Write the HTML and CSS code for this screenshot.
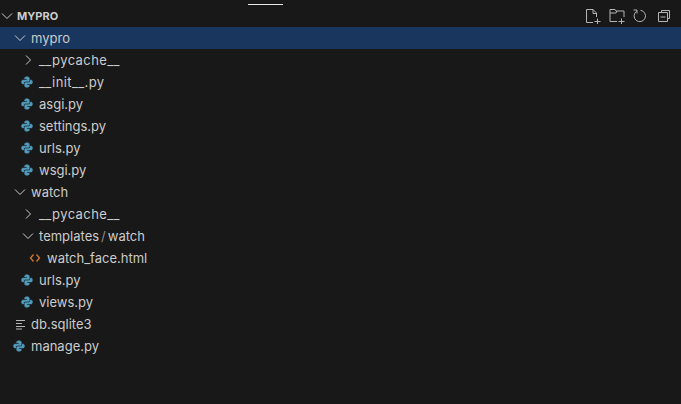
FILE: index.html
```html
<!DOCTYPE html>
<html lang="en">
<head>
  <meta charset="UTF-8" />
  <title>Explorer</title>
  <link rel="stylesheet" href="styles.css">
</head>
<body>
  <svg class="defs" width="0" height="0">
    <symbol id="chev-down" viewBox="0 0 16 16"><path d="M3 5.500 8 10.500l5-5" fill="none" stroke="currentColor" stroke-width="1"/></symbol>
    <symbol id="chev-right" viewBox="0 0 16 16"><path d="M6 3.500 10.500 8 6 12.500" fill="none" stroke="currentColor" stroke-width="1"/></symbol>
    <symbol id="py" viewBox="-0.9 -2.2 20.4 20.4">
      <path fill="#519aba" stroke="#519aba" stroke-width="0.5" d="M5 4.200V3c0-1 1-1.800 3-1.800S11 2 11 3v3c0 .8-.6 1.400-1.400 1.400H6.200C4.900 7.400 4 8.300 4 9.600v1H2.800C1.600 10.600 1 9.500 1 8s.6-2.600 1.800-2.600H8V4.200z"/>
      <path fill="#519aba" stroke="#519aba" stroke-width="0.5" d="M11 11.800V13c0 1-1 1.800-3 1.800S5 14 5 13v-3c0-.8.6-1.400 1.400-1.400h3.400c1.300 0 2.200-.9 2.200-2.200v-1h1.200C14.400 5.400 15 6.500 15 8s-.6 2.600-1.800 2.600H8v1.200z"/>
    </symbol>
    <symbol id="code" viewBox="0 0 16 16"><path d="M5.500 4.500 2.500 8l3 3.500M8.500 4.500l3 3.500-3 3.500" fill="none" stroke="#d9772d" stroke-width="1.300"/></symbol>
    <symbol id="lines" viewBox="0 0 16 16"><path d="M4 4.500h9M4 7.500h6M4 10.500h9M4 13h6" fill="none" stroke="#b8b8b8" stroke-width="1"/></symbol>
  </svg>

  <div class="drag-line"></div>

  <div class="explorer">
    <div class="header">
      <div class="header-title">
        <svg class="icon"><use href="#chev-down"/></svg>
        <span>MYPRO</span>
      </div>
      <div class="actions">
        <svg class="icon" viewBox="0 0 16 16"><path d="M1.500 14.500V1.500h6.500l3.500 3.500v4M8 1.500V5.500h3.500M1.500 14.500H8M9.500 13.500h6M12.500 10.500v6" fill="none" stroke="currentColor"/></svg>
        <svg class="icon" viewBox="0 0 16 16"><path d="M8 13.500H1V1.500h5l1 1.500h8v6M1 5h6l1-2M9.500 13.500h6M12.500 10.500v6" fill="none" stroke="currentColor"/></svg>
        <svg class="icon" viewBox="0 0 16 16"><path d="M3.500 3.300A5.700 5.700 0 1 0 7.500 2.300M.5 2h3.500v3.500" fill="none" stroke="currentColor"/></svg>
        <svg class="icon" viewBox="0 0 16 16"><path d="M4.500 4.500V2.500h8v8h-2M1.500 4.500h9v9h-9zM3.500 9h5" fill="none" stroke="currentColor"/></svg>
      </div>
    </div>

    <div class="row depth-1 selected"><svg class="icon"><use href="#chev-down"/></svg><span>mypro</span></div>
    <div class="row depth-2"><svg class="icon"><use href="#chev-right"/></svg><span class="dunder">__pycache__</span></div>
    <div class="row depth-2"><svg class="icon"><use href="#py"/></svg><span class="dunder">__init__.py</span></div>
    <div class="row depth-2"><svg class="icon"><use href="#py"/></svg><span>asgi.py</span></div>
    <div class="row depth-2"><svg class="icon"><use href="#py"/></svg><span>settings.py</span></div>
    <div class="row depth-2"><svg class="icon"><use href="#py"/></svg><span>urls.py</span></div>
    <div class="row depth-2"><svg class="icon"><use href="#py"/></svg><span>wsgi.py</span></div>
    <div class="row depth-1"><svg class="icon"><use href="#chev-down"/></svg><span>watch</span></div>
    <div class="row depth-2"><svg class="icon"><use href="#chev-right"/></svg><span class="dunder">__pycache__</span></div>
    <div class="row depth-2"><svg class="icon"><use href="#chev-down"/></svg><span>templates<span class="sep">/</span>watch</span></div>
    <div class="row depth-3"><svg class="icon"><use href="#code"/></svg><span>watch_face.html</span></div>
    <div class="row depth-2"><svg class="icon"><use href="#py"/></svg><span>urls.py</span></div>
    <div class="row depth-2"><svg class="icon"><use href="#py"/></svg><span>views.py</span></div>
    <div class="row depth-1"><svg class="icon"><use href="#lines"/></svg><span>db.sqlite3</span></div>
    <div class="row depth-1"><svg class="icon"><use href="#py"/></svg><span>manage.py</span></div>
  </div>
</body>
</html>
```

FILE: styles.css
```css
html, body {
  margin: 0;
  height: 100%;
  overflow: hidden;
}

body {
  background: #181818;
  color: #cccccc;
  font-family: Inter, 'Liberation Sans', sans-serif;
  font-size: 13px;
}

.defs {
  position: absolute;
}

.drag-line {
  position: absolute;
  top: 4px;
  left: 248px;
  width: 35px;
  height: 1px;
  background: #e8e8e8;
}

.explorer {
  padding-top: 5px;
}

.icon {
  width: 16px;
  height: 16px;
  flex: none;
}

.header {
  height: 22px;
  display: flex;
  align-items: center;
  justify-content: space-between;
  padding-right: 8px;
}

.header-title {
  display: flex;
  align-items: center;
  gap: 2px;
  margin-left: -1px;
  font-size: 11px;
  font-weight: 700;
}

.actions {
  display: flex;
  gap: 8px;
  color: #b4b4b4;
}

.row {
  height: 22px;
  display: flex;
  align-items: center;
  gap: 3px;
}

.depth-1 {
  padding-left: 12px;
}

.depth-2 {
  padding-left: 20px;
}

.depth-3 {
  padding-left: 28px;
}

.selected {
  background: #18365e;
}

.dunder {
  letter-spacing: 0.4px;
}

.sep {
  margin: 0 2px;
  color: #8a8a8a;
}
```
